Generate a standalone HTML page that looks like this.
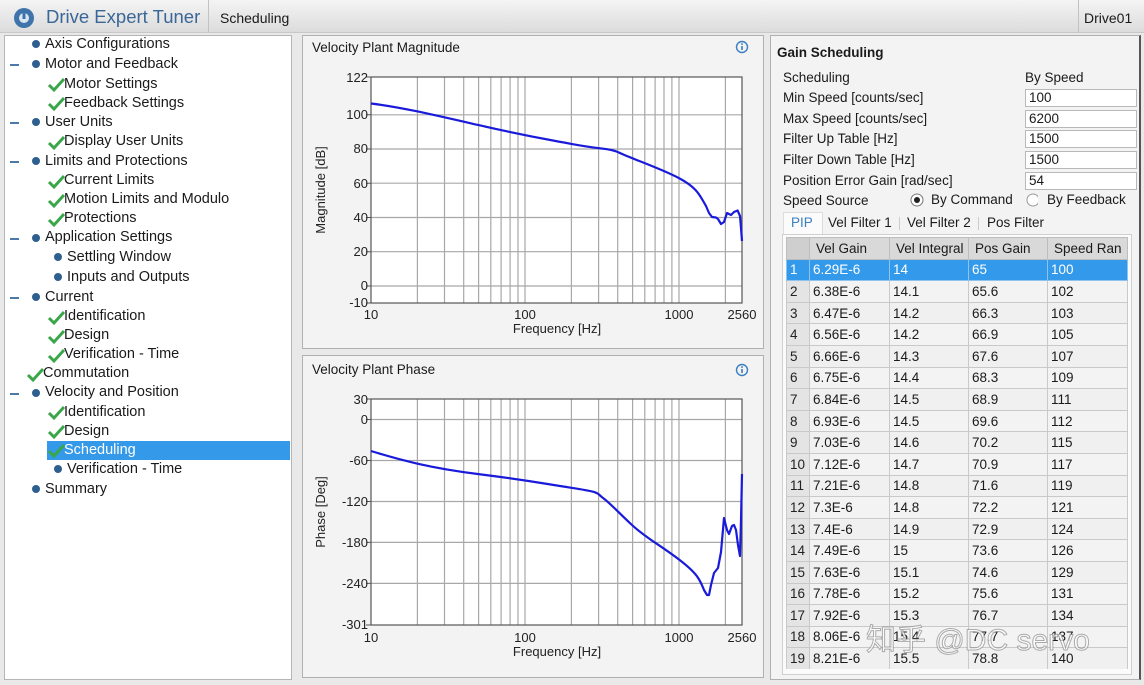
<!DOCTYPE html>
<html><head><meta charset="utf-8"><style>
*{margin:0;padding:0;box-sizing:border-box}
body{width:1144px;height:685px;overflow:hidden;background:#e9e9e9;font-family:"Liberation Sans",Arial,sans-serif;position:relative;color:#1a1a1a}
.abs{position:absolute}
#hdr{left:0;top:0;width:1144px;height:33px;background:linear-gradient(#f4f4f4,#dcdcdc);border-bottom:1px solid #c8c8c8}
.sep{width:1px;height:33px;background:#c2c2c2;top:0}
#left{left:4px;top:35px;width:288px;height:645px;background:#fff;border:1px solid #b5b5b5}
.ti{position:absolute;font-size:14.5px;white-space:nowrap;line-height:18px}
.dot{position:absolute;width:8px;height:8px;border-radius:50%;background:#2f5f8f}
.minus{position:absolute;width:9px;height:2px;background:#4a7aa8}
.chk{position:absolute;width:17px;height:14px}
.panel{background:#f3f3f3;border:1px solid #b0b0b0}
.lbl{position:absolute;font-size:13.5px;white-space:nowrap}
.inp{position:absolute;left:1025px;width:112px;height:18px;background:#fff;border:1px solid #b8b8b8;font-size:13.5px;padding-left:3px;line-height:16px}
table{border-collapse:collapse;font-size:13.5px;table-layout:fixed}
td,th{border:1px solid #c9c9c9;height:21.6px;padding:0 0 0 3px;text-align:left;font-weight:normal;white-space:nowrap;overflow:hidden}
th{background:#d9d9d9;padding-left:6px;border-color:#bdbdbd}
tr:nth-child(even) td{background:#f0f0f0}
tr.sel td{background:#3399ea;color:#fff;border-color:#8ec3f0}
td.n{background:#e4e4e4 !important;color:#222;padding-left:3px}
tr.sel td.n{background:#3399ea !important;color:#fff}
</style></head><body>
<div id="hdr" class="abs"></div>
<svg class="abs" style="left:13px;top:7px" width="22" height="22" viewBox="0 0 22 22"><circle cx="11" cy="11" r="10" fill="#3f74aa"/><circle cx="11" cy="11" r="5" fill="#dbe6f1"/><rect x="9.5" y="4" width="3" height="8" fill="#3f74aa"/></svg>
<div class="abs" style="left:46px;top:6px;font-size:18.5px;color:#3a6797">Drive Expert Tuner</div>
<div class="abs sep" style="left:208px"></div>
<div class="abs" style="left:220px;top:10px;font-size:14px">Scheduling</div>
<div class="abs sep" style="left:1078px"></div>
<div class="abs" style="left:1084px;top:10px;font-size:14px">Drive01</div>

<div id="left" class="abs"></div>
<div class="abs" style="left:47px;top:441px;width:243px;height:19px;background:#3399e8"></div>
<svg class="abs" style="left:0;top:0" width="300" height="500">
<defs><path id="ck" d="M0 7 L5 12 L15 1" fill="none" stroke="#3aa64a" stroke-width="3"/></defs>
<g fill="#2f5f8f">
<circle cx="36" cy="44" r="4"/><circle cx="36" cy="64" r="4"/><circle cx="36" cy="122" r="4"/><circle cx="36" cy="161" r="4"/><circle cx="36" cy="238" r="4"/><circle cx="58" cy="257" r="4"/><circle cx="58" cy="277" r="4"/><circle cx="36" cy="297" r="4"/><circle cx="36" cy="393" r="4"/><circle cx="58" cy="469" r="4"/><circle cx="36" cy="489" r="4"/></g>
<g fill="#4a7aa8"><rect x="10" y="64" width="9" height="2"/><rect x="10" y="122" width="9" height="2"/><rect x="10" y="161" width="9" height="2"/><rect x="10" y="238" width="9" height="2"/><rect x="10" y="297" width="9" height="2"/><rect x="10" y="393" width="9" height="2"/></g>
<use href="#ck" x="49" y="78"/><use href="#ck" x="49" y="97"/><use href="#ck" x="49" y="136"/><use href="#ck" x="49" y="175"/><use href="#ck" x="49" y="194"/><use href="#ck" x="49" y="213"/><use href="#ck" x="49" y="311"/><use href="#ck" x="49" y="330"/><use href="#ck" x="49" y="349"/><use href="#ck" x="28" y="368"/><use href="#ck" x="49" y="406"/><use href="#ck" x="49" y="425"/><use href="#ck" x="49" y="444"/>
</svg>
<div class="ti" style="left:45px;top:35px">Axis Configurations</div>
<div class="ti" style="left:45px;top:55px">Motor and Feedback</div>
<div class="ti" style="left:64px;top:75px">Motor Settings</div>
<div class="ti" style="left:64px;top:94px">Feedback Settings</div>
<div class="ti" style="left:45px;top:113px">User Units</div>
<div class="ti" style="left:64px;top:132px">Display User Units</div>
<div class="ti" style="left:45px;top:152px">Limits and Protections</div>
<div class="ti" style="left:64px;top:171px">Current Limits</div>
<div class="ti" style="left:64px;top:190px">Motion Limits and Modulo</div>
<div class="ti" style="left:64px;top:209px">Protections</div>
<div class="ti" style="left:45px;top:228px">Application Settings</div>
<div class="ti" style="left:67px;top:248px">Settling Window</div>
<div class="ti" style="left:67px;top:268px">Inputs and Outputs</div>
<div class="ti" style="left:45px;top:288px">Current</div>
<div class="ti" style="left:64px;top:307px">Identification</div>
<div class="ti" style="left:64px;top:326px">Design</div>
<div class="ti" style="left:64px;top:345px">Verification - Time</div>
<div class="ti" style="left:43px;top:364px">Commutation</div>
<div class="ti" style="left:45px;top:383px">Velocity and Position</div>
<div class="ti" style="left:64px;top:403px">Identification</div>
<div class="ti" style="left:64px;top:422px">Design</div>
<div class="ti" style="left:64px;top:441px;color:#fff">Scheduling</div>
<div class="ti" style="left:67px;top:460px">Verification - Time</div>
<div class="ti" style="left:45px;top:480px">Summary</div>

<div class="abs panel" style="left:302px;top:35px;width:462px;height:314px"></div>
<div class="abs panel" style="left:302px;top:355px;width:462px;height:323px"></div>
<div class="abs" style="left:312px;top:40px;font-size:13.5px">Velocity Plant Magnitude</div>
<div class="abs" style="left:312px;top:362px;font-size:13.5px">Velocity Plant Phase</div>

<svg class="abs" style="left:0;top:0" width="770" height="685" font-family="Liberation Sans, Arial, sans-serif" font-size="13">
<rect x="371" y="77" width="371" height="226" fill="#fff"/>
<rect x="371" y="399" width="371" height="226" fill="#fff"/>
<g stroke="#a8a8a8" stroke-width="1.2">
<path id="vg" d="M417.4 77V303M444.5 77V303M463.7 77V303M478.6 77V303M490.8 77V303M501.1 77V303M510.1 77V303M518 77V303M525 77V303M571.4 77V303M598.6 77V303M617.7 77V303M632.6 77V303M644.8 77V303M655.1 77V303M664 77V303M671.9 77V303M679 77V303M725.4 77V303"/>
<path d="M371 114.8H742M371 149H742M371 183.2H742M371 217.5H742M371 251.7H742M371 286H742"/>
<path transform="translate(0,322)" d="M417.4 77V303M444.5 77V303M463.7 77V303M478.6 77V303M490.8 77V303M501.1 77V303M510.1 77V303M518 77V303M525 77V303M571.4 77V303M598.6 77V303M617.7 77V303M632.6 77V303M644.8 77V303M655.1 77V303M664 77V303M671.9 77V303M679 77V303M725.4 77V303"/>
<path d="M371 419.5H742M371 460.5H742M371 501.5H742M371 542.4H742M371 583.4H742"/>
</g>
<g fill="none" stroke="#555" stroke-width="1.2"><rect x="371" y="77" width="371" height="226"/><rect x="371" y="399" width="371" height="226"/></g>
<g stroke="#555"><path d="M366 77H371M366 114.8H371M366 149H371M366 183.2H371M366 217.5H371M366 251.7H371M366 286H371M366 303H371M366 399H371M366 419.5H371M366 460.5H371M366 501.5H371M366 542.4H371M366 583.4H371M366 625H371"/></g>
<g text-anchor="end" fill="#222">
<text x="368" y="82">122</text><text x="368" y="119">100</text><text x="368" y="153">80</text><text x="368" y="188">60</text><text x="368" y="222">40</text><text x="368" y="256">20</text><text x="368" y="290">0</text><text x="368" y="307">-10</text>
<text x="368" y="404">30</text><text x="368" y="424">0</text><text x="368" y="465">-60</text><text x="368" y="506">-120</text><text x="368" y="547">-180</text><text x="368" y="588">-240</text><text x="368" y="629">-301</text>
</g>
<g text-anchor="middle" fill="#222">
<text x="371" y="319">10</text><text x="525" y="319">100</text><text x="679" y="319">1000</text><text x="742" y="319">2560</text>
<text x="557" y="333">Frequency [Hz]</text>
<text x="371" y="642">10</text><text x="525" y="642">100</text><text x="679" y="642">1000</text><text x="742" y="642">2560</text>
<text x="557" y="656">Frequency [Hz]</text>
<text transform="translate(325,190) rotate(-90)">Magnitude [dB]</text>
<text transform="translate(325,512) rotate(-90)">Phase [Deg]</text>
</g>
<g fill="none" stroke="#1a1adb" stroke-width="2.2" stroke-linejoin="round">
<path d="M371 103.5C400 107 430 114 478.6 125.1S540 138 571.4 143.9S610 148 620 153S660 168 679 178.1S700 196 706 206L709 213L712 217L716 217.5L718 219L721 224L724 222L727 213L731 215L734 212L737.6 210.5L740 216L741 228L742 241"/>
<path d="M371 451C400 460 430 468 478.6 474.1S540 483 571.4 487.8S596 493 603 498S618 512 632 525S660 545 679 559.5S700 580 704 590L707 595L709 595L711 585L714 573L718 568L721 552L724 518L727 530L729 534L732 526L734 525L736 530L738 545L740 556L741 520L742 474"/>
</g>
<g fill="none" stroke="#3a7fc0" stroke-width="1.4"><circle cx="742" cy="47" r="5.5"/><circle cx="742" cy="370" r="5.5"/></g>
<g fill="#3a7fc0"><rect x="741.2" y="46" width="1.6" height="4"/><rect x="741.2" y="43.3" width="1.6" height="1.6"/><rect x="741.2" y="369" width="1.6" height="4"/><rect x="741.2" y="366.3" width="1.6" height="1.6"/></g>
</svg>

<div class="abs panel" style="left:770px;top:35px;width:371px;height:645px;border-right:2px solid #555"></div>
<div class="abs" style="left:777px;top:45px;font-size:13.5px;font-weight:bold">Gain Scheduling</div>
<div class="lbl" style="left:783px;top:70px">Scheduling</div><div class="lbl" style="left:1025px;top:70px">By Speed</div>
<div class="lbl" style="left:783px;top:90px">Min Speed [counts/sec]</div><div class="inp" style="top:89px">100</div>
<div class="lbl" style="left:783px;top:111px">Max Speed [counts/sec]</div><div class="inp" style="top:110px">6200</div>
<div class="lbl" style="left:783px;top:131px">Filter Up Table [Hz]</div><div class="inp" style="top:130px">1500</div>
<div class="lbl" style="left:783px;top:152px">Filter Down Table [Hz]</div><div class="inp" style="top:151px">1500</div>
<div class="lbl" style="left:783px;top:173px">Position Error Gain [rad/sec]</div><div class="inp" style="top:172px">54</div>
<div class="lbl" style="left:783px;top:193px">Speed Source</div>
<svg class="abs" style="left:908px;top:192px" width="130" height="16"><circle cx="9" cy="8" r="6" fill="#fff" stroke="#777"/><circle cx="9" cy="8" r="3" fill="#222"/><circle cx="125" cy="8" r="6" fill="#fff" stroke="#999"/></svg>
<div class="lbl" style="left:931px;top:192px">By Command</div>
<div class="lbl" style="left:1047px;top:192px">By Feedback</div>
<div class="abs" style="left:783px;top:212px;width:40px;height:24px;background:#fbfbfb;border:1px solid #ddd;border-bottom:none"></div>
<div class="lbl" style="left:791px;top:215px;color:#3a7fc0">PIP</div>
<div class="lbl" style="left:828px;top:215px">Vel Filter 1</div>
<div class="abs" style="left:899px;top:217px;width:1px;height:13px;background:#ccc"></div>
<div class="lbl" style="left:907px;top:215px">Vel Filter 2</div>
<div class="abs" style="left:978px;top:217px;width:1px;height:13px;background:#ccc"></div>
<div class="lbl" style="left:987px;top:215px">Pos Filter</div>
<div class="abs" style="left:782px;top:234px;width:350px;height:441px;background:#fbfbfb;border:1px solid #d0d0d0"></div>
<div class="abs" style="left:786px;top:237px;width:342px;height:432px;overflow:hidden;background:#f3f3f3">
<table style="width:341px">
<colgroup><col style="width:23px"><col style="width:80px"><col style="width:79px"><col style="width:79px"><col style="width:80px"></colgroup>
<tr><th style="background:#cfcfcf"></th><th>Vel Gain</th><th>Vel Integral</th><th>Pos Gain</th><th>Speed Ran</th></tr>
<tr class="sel"><td class="n">1</td><td>6.29E-6</td><td>14</td><td>65</td><td>100</td></tr>
<tr><td class="n">2</td><td>6.38E-6</td><td>14.1</td><td>65.6</td><td>102</td></tr>
<tr><td class="n">3</td><td>6.47E-6</td><td>14.2</td><td>66.3</td><td>103</td></tr>
<tr><td class="n">4</td><td>6.56E-6</td><td>14.2</td><td>66.9</td><td>105</td></tr>
<tr><td class="n">5</td><td>6.66E-6</td><td>14.3</td><td>67.6</td><td>107</td></tr>
<tr><td class="n">6</td><td>6.75E-6</td><td>14.4</td><td>68.3</td><td>109</td></tr>
<tr><td class="n">7</td><td>6.84E-6</td><td>14.5</td><td>68.9</td><td>111</td></tr>
<tr><td class="n">8</td><td>6.93E-6</td><td>14.5</td><td>69.6</td><td>112</td></tr>
<tr><td class="n">9</td><td>7.03E-6</td><td>14.6</td><td>70.2</td><td>115</td></tr>
<tr><td class="n">10</td><td>7.12E-6</td><td>14.7</td><td>70.9</td><td>117</td></tr>
<tr><td class="n">11</td><td>7.21E-6</td><td>14.8</td><td>71.6</td><td>119</td></tr>
<tr><td class="n">12</td><td>7.3E-6</td><td>14.8</td><td>72.2</td><td>121</td></tr>
<tr><td class="n">13</td><td>7.4E-6</td><td>14.9</td><td>72.9</td><td>124</td></tr>
<tr><td class="n">14</td><td>7.49E-6</td><td>15</td><td>73.6</td><td>126</td></tr>
<tr><td class="n">15</td><td>7.63E-6</td><td>15.1</td><td>74.6</td><td>129</td></tr>
<tr><td class="n">16</td><td>7.78E-6</td><td>15.2</td><td>75.6</td><td>131</td></tr>
<tr><td class="n">17</td><td>7.92E-6</td><td>15.3</td><td>76.7</td><td>134</td></tr>
<tr><td class="n">18</td><td>8.06E-6</td><td>15.4</td><td>77.7</td><td>137</td></tr>
<tr><td class="n">19</td><td>8.21E-6</td><td>15.5</td><td>78.8</td><td>140</td></tr>
<tr><td class="n">20</td><td></td><td></td><td></td><td></td></tr>
</table></div>
<div class="abs" style="left:866px;top:615px;font-size:30px;color:rgba(255,255,255,0.75);-webkit-text-stroke:1px rgba(120,120,120,0.6);font-family:'Liberation Sans','Noto Sans CJK SC',sans-serif;white-space:nowrap">知乎 @DC servo</div>
</body></html>
